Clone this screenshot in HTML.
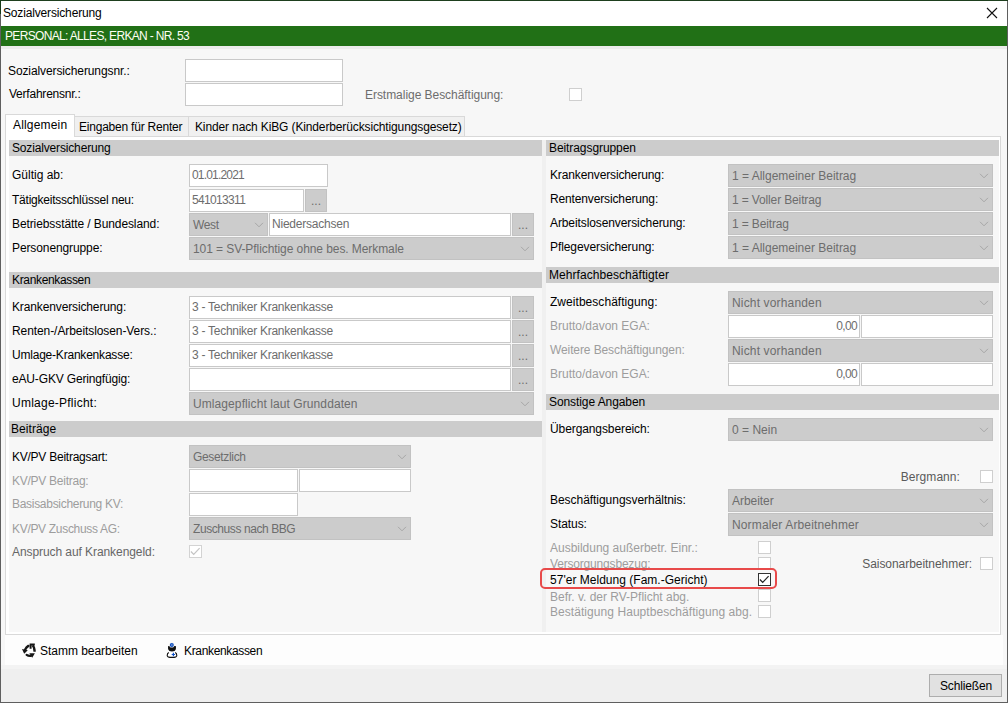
<!DOCTYPE html>
<html><head><meta charset="utf-8"><title>Sozialversicherung</title>
<style>
html,body{margin:0;padding:0;width:1008px;height:703px;overflow:hidden;background:#f5f5f5}
body{position:relative;font-family:"Liberation Sans", sans-serif;font-size:12px}
.r{position:absolute;box-sizing:content-box}
.t{position:absolute;white-space:nowrap;line-height:14px;letter-spacing:-0.1px}
</style></head><body>
<div class="r" style="left:0px;top:0px;width:1008px;height:703px;background:#5f5f5f;"></div>
<div class="r" style="left:1px;top:1px;width:1006px;height:701px;background:#f7f7f7;"></div>
<div class="r" style="left:1px;top:1px;width:1006px;height:25px;background:#ffffff;"></div>
<div class="r" style="left:0px;top:0px;width:1008px;height:1px;background:#1e3f1e;"></div>
<div class="r" style="left:0px;top:0px;width:1px;height:14px;background:#173a17;"></div>
<div class="t" style="left:3px;top:6px;color:#000;letter-spacing:-0.159px;">Sozialversicherung</div>
<svg class="r" style="left:986px;top:7px" width="12" height="12" viewBox="0 0 12 12"><path d="M1 1 L11 11 M11 1 L1 11" stroke="#111" stroke-width="1.1"/></svg>
<div class="r" style="left:1px;top:26px;width:1006px;height:20px;background:#217016;"></div>
<div class="t" style="left:5px;top:29px;color:#fffff4;letter-spacing:-0.667px;">PERSONAL: ALLES, ERKAN - NR. 53</div>
<div class="r" style="left:1px;top:46px;width:1006px;height:3px;background:#ececec;"></div>
<div class="t" style="left:8px;top:64px;color:#000;letter-spacing:-0.105px;">Sozialversicherungsnr.:</div>
<div class="r" style="left:185px;top:59px;width:156px;height:21px;background:#fff;border:1px solid #c9c9c9;"></div>
<div class="t" style="left:9px;top:87px;color:#000;letter-spacing:-0.223px;">Verfahrensnr.:</div>
<div class="r" style="left:185px;top:83px;width:156px;height:21px;background:#fff;border:1px solid #c9c9c9;"></div>
<div class="t" style="left:365px;top:88px;color:#6d6d6d;letter-spacing:-0.042px;">Erstmalige Beschäftigung:</div>
<div class="r" style="left:569px;top:88px;width:11px;height:11px;background:#fff;border:1px solid #cfcfcf;"></div>
<div class="r" style="left:5px;top:136px;width:994px;height:497px;background:#ffffff;border:1px solid #d9d9d9;"></div>
<div class="r" style="left:73px;top:116px;width:114px;height:19px;background:#f0f0f0;border:1px solid #d9d9d9;"></div>
<div class="r" style="left:188px;top:116px;width:275px;height:19px;background:#f0f0f0;border:1px solid #d9d9d9;"></div>
<div class="r" style="left:5px;top:114px;width:68px;height:21px;background:#ffffff;border:1px solid #d9d9d9;border-bottom:none;height:22px;"></div>
<div class="t" style="left:13px;top:118px;color:#000;letter-spacing:0.175px;">Allgemein</div>
<div class="t" style="left:79px;top:120px;color:#000;letter-spacing:-0.217px;">Eingaben für Renter</div>
<div class="t" style="left:195px;top:120px;color:#000;letter-spacing:-0.13px;">Kinder nach KiBG (Kinderberücksichtigungsgesetz)</div>
<div class="r" style="left:9px;top:140px;width:533px;height:492px;background:#f7f7f7;"></div>
<div class="r" style="left:542px;top:140px;width:4px;height:492px;background:#f0f0f0;"></div>
<div class="r" style="left:546px;top:140px;width:453px;height:492px;background:#f7f7f7;"></div>
<div class="r" style="left:9px;top:140px;width:533px;height:16px;background:#cccccc;"></div>
<div class="t" style="left:12px;top:141px;color:#000;letter-spacing:-0.159px;">Sozialversicherung</div>
<div class="t" style="left:12px;top:168px;color:#000;letter-spacing:0.0px;">Gültig ab:</div>
<div class="r" style="left:189px;top:164px;width:137px;height:21px;background:#fff;border:1px solid #c9c9c9;"></div>
<div class="t" style="left:192px;top:168px;color:#6d6d6d;letter-spacing:-0.822px;">01.01.2021</div>
<div class="t" style="left:12px;top:193px;color:#000;letter-spacing:-0.23px;">Tätigkeitsschlüssel neu:</div>
<div class="r" style="left:189px;top:189px;width:113px;height:21px;background:#fff;border:1px solid #c9c9c9;"></div>
<div class="t" style="left:192px;top:193px;color:#6d6d6d;letter-spacing:-0.662px;">541013311</div>
<div class="r" style="left:305px;top:189px;width:20px;height:21px;background:#cccccc;border:1px solid #c2c2c2;"></div>
<div class="t" style="left:305px;top:194px;width:22px;text-align:center;color:#6d6d6d;letter-spacing:0">...</div>
<div class="t" style="left:12px;top:217px;color:#000;letter-spacing:-0.096px;">Betriebsstätte / Bundesland:</div>
<div class="r" style="left:189px;top:213px;width:77px;height:21px;background:#cccccc;border:1px solid #c2c2c2;"></div>
<div class="t" style="left:193px;top:218px;color:#6d6d6d;letter-spacing:-0.333px;">West</div>
<svg class="r" style="left:254px;top:222px" width="10" height="6" viewBox="0 0 10 6"><path d="M1 0.8 L5 4.8 L9 0.8" fill="none" stroke="#a6a6a6" stroke-width="1"/></svg>
<div class="r" style="left:269px;top:213px;width:240px;height:21px;background:#fff;border:1px solid #c9c9c9;"></div>
<div class="t" style="left:272px;top:217px;color:#6d6d6d;letter-spacing:-0.217px;">Niedersachsen</div>
<div class="r" style="left:512px;top:213px;width:20px;height:21px;background:#cccccc;border:1px solid #c2c2c2;"></div>
<div class="t" style="left:512px;top:218px;width:22px;text-align:center;color:#6d6d6d;letter-spacing:0">...</div>
<div class="t" style="left:12px;top:241px;color:#000;letter-spacing:-0.107px;">Personengruppe:</div>
<div class="r" style="left:189px;top:237px;width:343px;height:21px;background:#cccccc;border:1px solid #c2c2c2;"></div>
<div class="t" style="left:193px;top:242px;color:#6d6d6d;letter-spacing:-0.076px;">101 = SV-Pflichtige ohne bes. Merkmale</div>
<svg class="r" style="left:520px;top:246px" width="10" height="6" viewBox="0 0 10 6"><path d="M1 0.8 L5 4.8 L9 0.8" fill="none" stroke="#a6a6a6" stroke-width="1"/></svg>
<div class="r" style="left:9px;top:272px;width:533px;height:16px;background:#cccccc;"></div>
<div class="t" style="left:12px;top:273px;color:#000;letter-spacing:-0.342px;">Krankenkassen</div>
<div class="t" style="left:12px;top:300px;color:#000;letter-spacing:-0.132px;">Krankenversicherung:</div>
<div class="r" style="left:189px;top:296px;width:320px;height:21px;background:#fff;border:1px solid #c9c9c9;"></div>
<div class="t" style="left:192px;top:300px;color:#6d6d6d;letter-spacing:-0.272px;">3 - Techniker Krankenkasse</div>
<div class="r" style="left:512px;top:296px;width:20px;height:21px;background:#cccccc;border:1px solid #c2c2c2;"></div>
<div class="t" style="left:512px;top:301px;width:22px;text-align:center;color:#6d6d6d;letter-spacing:0">...</div>
<div class="t" style="left:12px;top:324px;color:#000;letter-spacing:-0.081px;">Renten-/Arbeitslosen-Vers.:</div>
<div class="r" style="left:189px;top:320px;width:320px;height:21px;background:#fff;border:1px solid #c9c9c9;"></div>
<div class="t" style="left:192px;top:324px;color:#6d6d6d;letter-spacing:-0.272px;">3 - Techniker Krankenkasse</div>
<div class="r" style="left:512px;top:320px;width:20px;height:21px;background:#cccccc;border:1px solid #c2c2c2;"></div>
<div class="t" style="left:512px;top:325px;width:22px;text-align:center;color:#6d6d6d;letter-spacing:0">...</div>
<div class="t" style="left:12px;top:348px;color:#000;letter-spacing:-0.211px;">Umlage-Krankenkasse:</div>
<div class="r" style="left:189px;top:344px;width:320px;height:21px;background:#fff;border:1px solid #c9c9c9;"></div>
<div class="t" style="left:192px;top:348px;color:#6d6d6d;letter-spacing:-0.272px;">3 - Techniker Krankenkasse</div>
<div class="r" style="left:512px;top:344px;width:20px;height:21px;background:#cccccc;border:1px solid #c2c2c2;"></div>
<div class="t" style="left:512px;top:349px;width:22px;text-align:center;color:#6d6d6d;letter-spacing:0">...</div>
<div class="t" style="left:12px;top:372px;color:#000;letter-spacing:-0.158px;">eAU-GKV Geringfügig:</div>
<div class="r" style="left:189px;top:368px;width:320px;height:21px;background:#fff;border:1px solid #c9c9c9;"></div>
<div class="r" style="left:512px;top:368px;width:20px;height:21px;background:#cccccc;border:1px solid #c2c2c2;"></div>
<div class="t" style="left:512px;top:373px;width:22px;text-align:center;color:#6d6d6d;letter-spacing:0">...</div>
<div class="t" style="left:12px;top:396px;color:#000;letter-spacing:0.243px;">Umlage-Pflicht:</div>
<div class="r" style="left:189px;top:392px;width:343px;height:21px;background:#cccccc;border:1px solid #c2c2c2;"></div>
<div class="t" style="left:193px;top:397px;color:#6d6d6d;letter-spacing:0.086px;">Umlagepflicht laut Grunddaten</div>
<svg class="r" style="left:520px;top:401px" width="10" height="6" viewBox="0 0 10 6"><path d="M1 0.8 L5 4.8 L9 0.8" fill="none" stroke="#a6a6a6" stroke-width="1"/></svg>
<div class="r" style="left:9px;top:421px;width:533px;height:16px;background:#cccccc;"></div>
<div class="t" style="left:11px;top:422px;color:#000;letter-spacing:0.071px;">Beiträge</div>
<div class="t" style="left:12px;top:450px;color:#000;letter-spacing:-0.247px;">KV/PV Beitragsart:</div>
<div class="r" style="left:189px;top:445px;width:220px;height:21px;background:#cccccc;border:1px solid #c2c2c2;"></div>
<div class="t" style="left:193px;top:450px;color:#6d6d6d;letter-spacing:-0.333px;">Gesetzlich</div>
<svg class="r" style="left:397px;top:454px" width="10" height="6" viewBox="0 0 10 6"><path d="M1 0.8 L5 4.8 L9 0.8" fill="none" stroke="#a6a6a6" stroke-width="1"/></svg>
<div class="t" style="left:12px;top:474px;color:#9d9d9d;letter-spacing:-0.262px;">KV/PV Beitrag:</div>
<div class="r" style="left:189px;top:469px;width:107px;height:21px;background:#fff;border:1px solid #c9c9c9;"></div>
<div class="r" style="left:299px;top:469px;width:110px;height:21px;background:#fff;border:1px solid #c9c9c9;"></div>
<div class="t" style="left:12px;top:497px;color:#9d9d9d;letter-spacing:-0.295px;">Basisabsicherung KV:</div>
<div class="r" style="left:189px;top:493px;width:107px;height:21px;background:#fff;border:1px solid #c9c9c9;"></div>
<div class="t" style="left:12px;top:522px;color:#9d9d9d;letter-spacing:-0.312px;">KV/PV Zuschuss AG:</div>
<div class="r" style="left:189px;top:517px;width:220px;height:21px;background:#cccccc;border:1px solid #c2c2c2;"></div>
<div class="t" style="left:193px;top:522px;color:#6d6d6d;letter-spacing:-0.419px;">Zuschuss nach BBG</div>
<svg class="r" style="left:397px;top:526px" width="10" height="6" viewBox="0 0 10 6"><path d="M1 0.8 L5 4.8 L9 0.8" fill="none" stroke="#a6a6a6" stroke-width="1"/></svg>
<div class="t" style="left:12px;top:545px;color:#666;letter-spacing:-0.075px;">Anspruch auf Krankengeld:</div>
<div class="r" style="left:189px;top:545px;width:11px;height:11px;background:#fff;border:1px solid #d3d3d3;"></div>
<svg class="r" style="left:190px;top:546px" width="11" height="11" viewBox="0 0 11 11"><path d="M0.9 5.5 L3.7 8.3 L9.6 2.1" fill="none" stroke="#c4c4c4" stroke-width="1.2"/></svg>
<div class="r" style="left:546px;top:140px;width:453px;height:16px;background:#cccccc;"></div>
<div class="t" style="left:549px;top:141px;color:#000;letter-spacing:-0.079px;">Beitragsgruppen</div>
<div class="t" style="left:550px;top:168px;color:#000;letter-spacing:-0.132px;">Krankenversicherung:</div>
<div class="r" style="left:728px;top:164px;width:263px;height:21px;background:#cccccc;border:1px solid #c2c2c2;"></div>
<div class="t" style="left:732px;top:169px;color:#6d6d6d;letter-spacing:-0.009px;">1 = Allgemeiner Beitrag</div>
<svg class="r" style="left:979px;top:173px" width="10" height="6" viewBox="0 0 10 6"><path d="M1 0.8 L5 4.8 L9 0.8" fill="none" stroke="#a6a6a6" stroke-width="1"/></svg>
<div class="t" style="left:550px;top:192px;color:#000;letter-spacing:-0.139px;">Rentenversicherung:</div>
<div class="r" style="left:728px;top:188px;width:263px;height:21px;background:#cccccc;border:1px solid #c2c2c2;"></div>
<div class="t" style="left:732px;top:193px;color:#6d6d6d;letter-spacing:-0.135px;">1 = Voller Beitrag</div>
<svg class="r" style="left:979px;top:197px" width="10" height="6" viewBox="0 0 10 6"><path d="M1 0.8 L5 4.8 L9 0.8" fill="none" stroke="#a6a6a6" stroke-width="1"/></svg>
<div class="t" style="left:550px;top:216px;color:#000;letter-spacing:-0.1px;">Arbeitslosenversicherung:</div>
<div class="r" style="left:728px;top:212px;width:263px;height:21px;background:#cccccc;border:1px solid #c2c2c2;"></div>
<div class="t" style="left:732px;top:217px;color:#6d6d6d;letter-spacing:-0.14px;">1 = Beitrag</div>
<svg class="r" style="left:979px;top:221px" width="10" height="6" viewBox="0 0 10 6"><path d="M1 0.8 L5 4.8 L9 0.8" fill="none" stroke="#a6a6a6" stroke-width="1"/></svg>
<div class="t" style="left:550px;top:240px;color:#000;letter-spacing:-0.078px;">Pflegeversicherung:</div>
<div class="r" style="left:728px;top:236px;width:263px;height:21px;background:#cccccc;border:1px solid #c2c2c2;"></div>
<div class="t" style="left:732px;top:241px;color:#6d6d6d;letter-spacing:-0.009px;">1 = Allgemeiner Beitrag</div>
<svg class="r" style="left:979px;top:245px" width="10" height="6" viewBox="0 0 10 6"><path d="M1 0.8 L5 4.8 L9 0.8" fill="none" stroke="#a6a6a6" stroke-width="1"/></svg>
<div class="r" style="left:546px;top:267px;width:453px;height:16px;background:#cccccc;"></div>
<div class="t" style="left:549px;top:268px;color:#000;letter-spacing:0.06px;">Mehrfachbeschäftigter</div>
<div class="t" style="left:550px;top:295px;color:#000;letter-spacing:0.044px;">Zweitbeschäftigung:</div>
<div class="r" style="left:728px;top:291px;width:263px;height:21px;background:#cccccc;border:1px solid #c2c2c2;"></div>
<div class="t" style="left:732px;top:296px;color:#6d6d6d;letter-spacing:0.157px;">Nicht vorhanden</div>
<svg class="r" style="left:979px;top:300px" width="10" height="6" viewBox="0 0 10 6"><path d="M1 0.8 L5 4.8 L9 0.8" fill="none" stroke="#a6a6a6" stroke-width="1"/></svg>
<div class="t" style="left:550px;top:319px;color:#9d9d9d;letter-spacing:-0.006px;">Brutto/davon EGA:</div>
<div class="r" style="left:728px;top:315px;width:130px;height:21px;background:#fff;border:1px solid #c9c9c9;"></div>
<div class="t" style="right:151px;top:319px;color:#6d6d6d;letter-spacing:-0.667px;">0,00</div>
<div class="r" style="left:861px;top:315px;width:130px;height:21px;background:#fff;border:1px solid #c9c9c9;"></div>
<div class="t" style="left:550px;top:343px;color:#9d9d9d;letter-spacing:-0.104px;">Weitere Beschäftigungen:</div>
<div class="r" style="left:728px;top:339px;width:263px;height:21px;background:#cccccc;border:1px solid #c2c2c2;"></div>
<div class="t" style="left:732px;top:344px;color:#6d6d6d;letter-spacing:0.157px;">Nicht vorhanden</div>
<svg class="r" style="left:979px;top:348px" width="10" height="6" viewBox="0 0 10 6"><path d="M1 0.8 L5 4.8 L9 0.8" fill="none" stroke="#a6a6a6" stroke-width="1"/></svg>
<div class="t" style="left:550px;top:367px;color:#9d9d9d;letter-spacing:-0.006px;">Brutto/davon EGA:</div>
<div class="r" style="left:728px;top:363px;width:130px;height:21px;background:#fff;border:1px solid #c9c9c9;"></div>
<div class="t" style="right:151px;top:367px;color:#6d6d6d;letter-spacing:-0.667px;">0,00</div>
<div class="r" style="left:861px;top:363px;width:130px;height:21px;background:#fff;border:1px solid #c9c9c9;"></div>
<div class="r" style="left:546px;top:394px;width:453px;height:16px;background:#cccccc;"></div>
<div class="t" style="left:549px;top:395px;color:#000;letter-spacing:-0.08px;">Sonstige Angaben</div>
<div class="t" style="left:550px;top:422px;color:#000;letter-spacing:-0.094px;">Übergangsbereich:</div>
<div class="r" style="left:728px;top:418px;width:263px;height:21px;background:#cccccc;border:1px solid #c2c2c2;"></div>
<div class="t" style="left:732px;top:423px;color:#6d6d6d;letter-spacing:0.014px;">0 = Nein</div>
<svg class="r" style="left:979px;top:427px" width="10" height="6" viewBox="0 0 10 6"><path d="M1 0.8 L5 4.8 L9 0.8" fill="none" stroke="#a6a6a6" stroke-width="1"/></svg>
<div class="t" style="right:48px;top:470px;color:#5a5a5a;letter-spacing:0.062px;">Bergmann:</div>
<div class="r" style="left:980px;top:470px;width:11px;height:11px;background:#fff;border:1px solid #cfcfcf;"></div>
<div class="t" style="left:550px;top:493px;color:#000;letter-spacing:-0.042px;">Beschäftigungsverhältnis:</div>
<div class="r" style="left:728px;top:489px;width:263px;height:21px;background:#cccccc;border:1px solid #c2c2c2;"></div>
<div class="t" style="left:732px;top:494px;color:#6d6d6d;letter-spacing:-0.043px;">Arbeiter</div>
<svg class="r" style="left:979px;top:498px" width="10" height="6" viewBox="0 0 10 6"><path d="M1 0.8 L5 4.8 L9 0.8" fill="none" stroke="#a6a6a6" stroke-width="1"/></svg>
<div class="t" style="left:550px;top:517px;color:#000;letter-spacing:-0.067px;">Status:</div>
<div class="r" style="left:728px;top:513px;width:263px;height:21px;background:#cccccc;border:1px solid #c2c2c2;"></div>
<div class="t" style="left:732px;top:518px;color:#6d6d6d;letter-spacing:0.14px;">Normaler Arbeitnehmer</div>
<svg class="r" style="left:979px;top:522px" width="10" height="6" viewBox="0 0 10 6"><path d="M1 0.8 L5 4.8 L9 0.8" fill="none" stroke="#a6a6a6" stroke-width="1"/></svg>
<div class="t" style="left:550px;top:541px;color:#9d9d9d;letter-spacing:-0.011px;">Ausbildung außerbetr. Einr.:</div>
<div class="r" style="left:758px;top:541px;width:11px;height:11px;background:#fff;border:1px solid #cfcfcf;"></div>
<div class="t" style="left:550px;top:557px;height:14px;overflow:hidden;color:#9d9d9d;letter-spacing:-0.181px">Versorgungsbezug:</div>
<div class="r" style="left:758px;top:557px;width:11px;height:11px;background:#fff;border:1px solid #cfcfcf;"></div>
<div class="t" style="right:36px;top:557px;color:#5a5a5a;letter-spacing:-0.05px;">Saisonarbeitnehmer:</div>
<div class="r" style="left:980px;top:557px;width:11px;height:11px;background:#fff;border:1px solid #cfcfcf;"></div>
<div class="t" style="left:550px;top:573px;color:#000;letter-spacing:0.019px;">57&#x27;er Meldung (Fam.-Gericht)</div>
<div class="r" style="left:758px;top:573px;width:11px;height:11px;background:#fff;border:1px solid #333;"></div>
<svg class="r" style="left:759px;top:574px" width="11" height="11" viewBox="0 0 11 11"><path d="M0.9 5.5 L3.7 8.3 L9.6 2.1" fill="none" stroke="#222" stroke-width="1.2"/></svg>
<div class="r" style="left:540px;top:568px;width:233px;height:17px;border:2px solid #e84a4a;border-radius:5px"></div>
<div class="t" style="left:550px;top:590px;color:#9d9d9d;letter-spacing:-0.011px;">Befr. v. der RV-Pflicht abg.</div>
<div class="r" style="left:758px;top:589px;width:11px;height:11px;background:#fff;border:1px solid #cfcfcf;"></div>
<div class="t" style="left:550px;top:605px;color:#9d9d9d;letter-spacing:0.059px;">Bestätigung Hauptbeschäftigung abg.</div>
<div class="r" style="left:758px;top:605px;width:11px;height:11px;background:#fff;border:1px solid #cfcfcf;"></div>
<div class="r" style="left:5px;top:635px;width:998px;height:30px;background:#fdfdfd;"></div>
<div class="r" style="left:1px;top:665px;width:1006px;height:37px;background:#efefef;"></div>
<div class="r" style="left:1px;top:665px;width:1006px;height:4px;background:#f3f3f3;"></div>
<div class="t" style="left:40px;top:644px;color:#000;letter-spacing:-0.033px;">Stamm bearbeiten</div>
<div class="t" style="left:184px;top:644px;color:#000;letter-spacing:-0.342px;">Krankenkassen</div>
<svg class="r" style="left:19px;top:641px" width="20" height="20" viewBox="0 0 20 20">
<path d="M9.4 4.9 Q7.4 6 6.2 8.6" fill="none" stroke="#161616" stroke-width="2.4" stroke-linecap="round"/>
<path d="M3 8.1 L5.2 12.8 L8.8 9.2 Z" fill="#161616"/>
<path d="M11.6 7.7 V3.6 H15.8" fill="none" stroke="#161616" stroke-width="2"/>
<path d="M13.6 4.2 Q15.6 6.2 15.6 10.8" fill="none" stroke="#161616" stroke-width="2.3"/>
<path d="M10.3 12.2 H15.9 L13.2 16.8 Z" fill="#161616"/>
<path d="M7.6 13.9 Q9.6 15.2 12 14.8" fill="none" stroke="#161616" stroke-width="2.2" stroke-linecap="round"/>
</svg>
<svg class="r" style="left:162px;top:640px" width="20" height="20" viewBox="0 0 20 20">
<path d="M6 6.6 Q6 6 7 6.1 L13 6.1 Q14 6 14 6.6 L13.9 9 Q13.2 11.5 10 11.5 Q6.8 11.5 6.1 9 Z" fill="#111"/>
<circle cx="9.8" cy="5" r="2.6" fill="#f2efe9"/>
<circle cx="9.8" cy="5" r="2.0" fill="#0d50c8"/>
<rect x="9.1" y="4.3" width="1.4" height="1.4" fill="#8aa0c8"/>
<path d="M6.8 12.6 Q5.2 13.4 5.2 15.4 Q5.2 17.4 10 17.4 Q14.8 17.4 14.8 15.4 Q14.8 13.4 13.2 12.6" fill="#fff" stroke="#111" stroke-width="1.1"/>
<path d="M11.4 12.8 V16.2 M9.7 14.5 H13.1" stroke="#0d50c8" stroke-width="1.2"/>
</svg>
<div class="r" style="left:929px;top:674px;width:71px;height:21px;background:#e1e1e1;border:1px solid #adadad;"></div>
<div class="t" style="left:940px;top:679px;color:#000;letter-spacing:-0.162px">Schließen</div>
</body></html>
